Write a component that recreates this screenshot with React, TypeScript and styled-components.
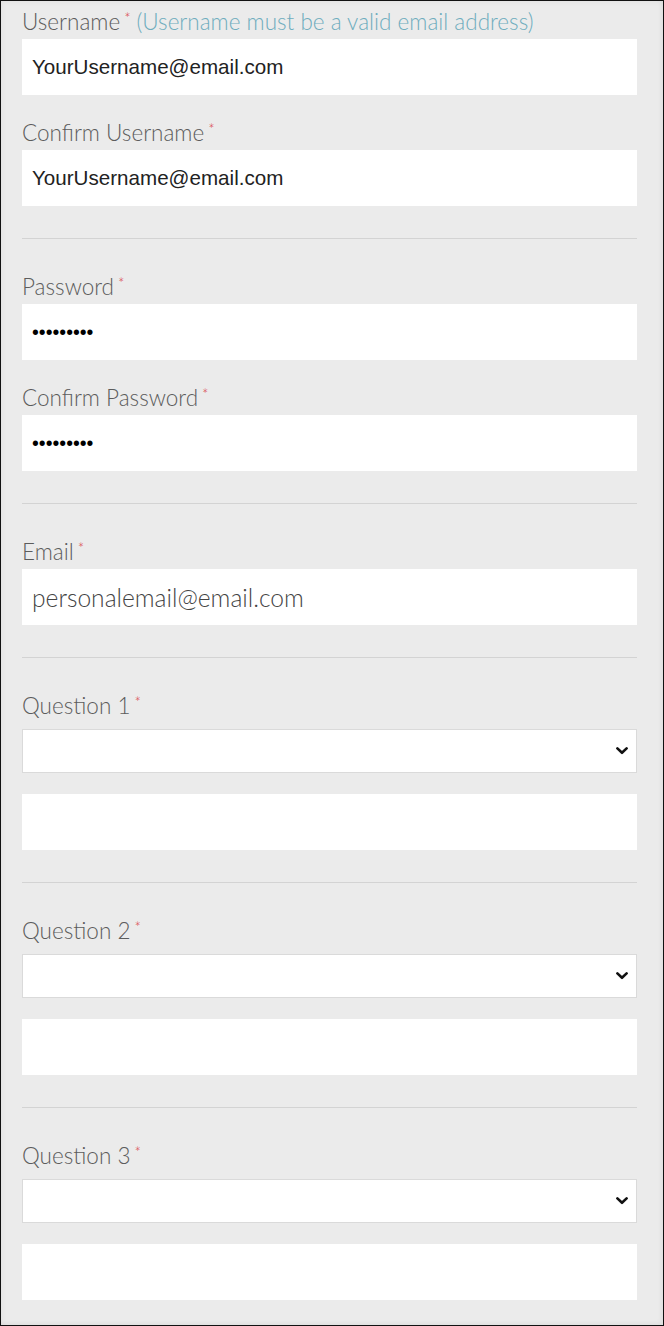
import React from 'react'
import styled, { createGlobalStyle } from 'styled-components'

/* ------------------------ global ------------------------ */
const Global = createGlobalStyle`
  html, body { margin: 0; padding: 0; }
  body { font-family: Lato, "Open Sans", sans-serif; background: #ebebeb; }
  * { box-sizing: border-box; }
`

/* ------------------------ styled ------------------------ */
const Page = styled.div`
  min-height: 100vh;
  background: #ebebeb;
  border: 1px solid #111;
  box-shadow: inset -2px -2px 4px rgba(0,0,0,.05), inset 2px 2px 4px rgba(0,0,0,.03);
  padding: 9px 26px 25px 21px;
  display: flex;
  flex-direction: column;
`
const Section = styled.section`
  display: flex;
  flex-direction: column;
  gap: 26px;
`
const Divider = styled.hr`
  border: none;
  height: 1px;
  background: #d3d3d3;
  margin: 32px 0 36px;
`
const Field = styled.div`
  display: flex;
  flex-direction: column;
`
const Label = styled.label<{ $select?: boolean }>`
  display: block;
  height: 24px;
  font-family: Lato, "Open Sans", sans-serif;
  font-weight: 300;
  font-size: 22.5px;
  line-height: 24px;
  color: #5c5c5c;
  margin-bottom: ${({ $select }) => ($select ? '11px' : '5px')};
  white-space: nowrap;
  .req { color: #d9363e; font-size: 15px; line-height: 0; vertical-align: 6px; margin-left: 4px; }
  .hint { color: #6fadbe; margin-left: 6px; }
`
const TextInput = styled.input<{ $soft?: boolean }>`
  display: block;
  width: 100%;
  height: 56px;
  border: none;
  outline: none;
  background: #fff;
  padding: 0 10px;
  margin: 0;
  font-family: ${({ $soft }) => ($soft ? 'Lato, "Open Sans", sans-serif' : '"Liberation Sans", Arial, sans-serif')};
  font-weight: ${({ $soft }) => ($soft ? 300 : 400)};
  font-size: ${({ $soft }) => ($soft ? '24.6px' : '20.6px')};
  color: ${({ $soft }) => ($soft ? '#444' : '#222')};
  &[type='password'] { font-size: 19.5px; color: #000; }
`
const SelectWrap = styled.div`
  position: relative;
  margin-bottom: 21px;
  svg {
    position: absolute;
    right: 9px;
    top: 50%;
    transform: translateY(-50%);
    pointer-events: none;
  }
`
const Select = styled.select`
  display: block;
  width: 100%;
  height: 44px;
  appearance: none;
  -webkit-appearance: none;
  background: #fff;
  border: 1px solid #dadada;
  border-radius: 0;
  outline: none;
  padding: 0 30px 0 10px;
  font-family: "Liberation Sans", Arial, sans-serif;
  font-size: 18px;
  color: #222;
`

const Chevron = () => (
  <svg width="12" height="8" viewBox="0 0 12 8">
    <path d="M1.4 1.4 L6 5.8 L10.6 1.4" fill="none" stroke="#111" strokeWidth="2.6" strokeLinecap="round" strokeLinejoin="round" />
  </svg>
)

const Req = () => <span className="req">*</span>

function QuestionBlock({ n }: { n: number }) {
  return (
    <Field>
      <Label $select>Question {n}<Req /></Label>
      <SelectWrap>
        <Select defaultValue="">
          <option value=""></option>
        </Select>
        <Chevron />
      </SelectWrap>
      <TextInput type="text" defaultValue="" />
    </Field>
  )
}

export default function App() {
  return (
    <>
      <Global />
      <Page>
        <Section>
          <Field>
            <Label>Username<Req /><span className="hint">(Username must be a valid email address)</span></Label>
            <TextInput type="text" defaultValue="YourUsername@email.com" />
          </Field>
          <Field>
            <Label>Confirm Username<Req /></Label>
            <TextInput type="text" defaultValue="YourUsername@email.com" />
          </Field>
        </Section>

        <Divider />

        <Section>
          <Field>
            <Label>Password<Req /></Label>
            <TextInput type="password" defaultValue="123456789" />
          </Field>
          <Field>
            <Label>Confirm Password<Req /></Label>
            <TextInput type="password" defaultValue="123456789" />
          </Field>
        </Section>

        <Divider />

        <Section>
          <Field>
            <Label>Email<Req /></Label>
            <TextInput $soft type="text" defaultValue="personalemail@email.com" />
          </Field>
        </Section>

        <Divider />
        <QuestionBlock n={1} />
        <Divider />
        <QuestionBlock n={2} />
        <Divider />
        <QuestionBlock n={3} />
      </Page>
    </>
  )
}
